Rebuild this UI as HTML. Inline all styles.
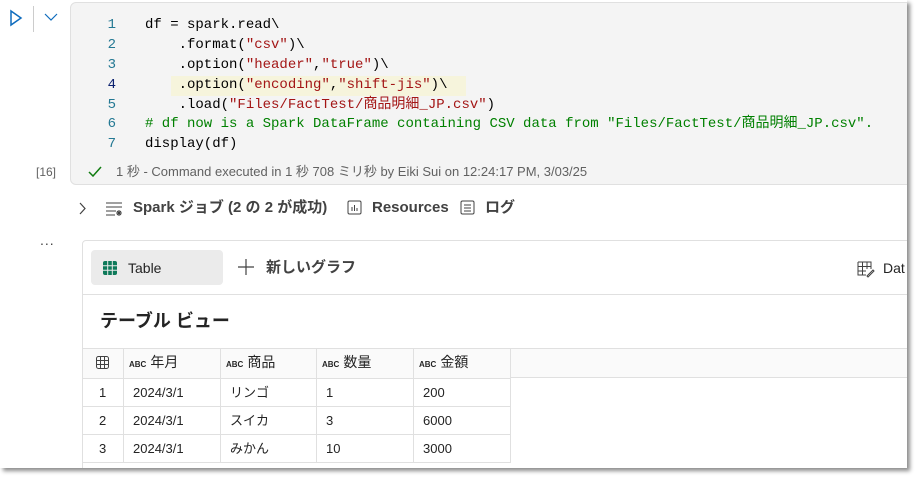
<!DOCTYPE html>
<html><head><meta charset="utf-8"><style>
*{margin:0;padding:0;box-sizing:border-box}
body{width:921px;height:484px;background:#fff;position:relative;overflow:hidden;font-family:"Liberation Sans","Noto Sans CJK JP",sans-serif;color:#242424}
.frame{position:absolute;left:0;top:0;width:907px;height:468px;background:#fff;overflow:hidden;box-shadow:3px 3px 4px rgba(0,0,0,.45)}
.abs{position:absolute;line-height:20px;white-space:nowrap}
.code{left:70px;top:2px;width:850px;height:183px;background:#f4f4f4;border:1px solid #e0e0e0;border-radius:6px}
.ln{position:absolute;left:100px;width:16px;text-align:right;font:14px/20px "Liberation Mono",monospace;color:#237893}
.cl{position:absolute;left:145px;height:20px;font:14px/20px "Liberation Mono","Noto Sans CJK JP",monospace;color:#000;white-space:pre}
.s{color:#a31515}.c{color:#008000}
.out{left:82px;top:240px;width:840px;height:240px;border:1px solid #e0e0e0;border-radius:4px;background:#fff}
table{position:absolute;left:82px;top:348px;border-collapse:collapse;font-size:13px;line-height:16px}
td{border:1px solid #e0e0e0;height:28px;padding-left:9px;color:#242424}
tr.h td{background:#fafafa;height:30px;font-size:14px}
.abc{font-size:8px;font-weight:bold;margin-right:4px}
</style></head><body><div class="frame">
<svg class="abs" style="left:9px;top:9px" width="14" height="18"><path d="M2 2 L12 9 L2 16 Z" fill="none" stroke="#0f6cbd" stroke-width="1.5"/></svg>
<div class="abs" style="left:33px;top:6px;width:1px;height:26px;background:#ccc"></div>
<svg class="abs" style="left:44px;top:13px" width="14" height="9"><path d="M1 1 L7 7 L13 1" fill="none" stroke="#0f6cbd" stroke-width="1.2"/></svg>
<div class="abs code"></div>
<div class="abs" style="left:171px;top:76px;width:295px;height:20px;background:#f6f4dc"></div>
<div class="ln" style="top:15px">1</div><div class="ln" style="top:35px">2</div><div class="ln" style="top:55px">3</div><div class="ln" style="top:75px;color:#0b216f">4</div><div class="ln" style="top:95px">5</div><div class="ln" style="top:114px">6</div><div class="ln" style="top:134px">7</div>
<div class="cl" style="top:15px">df = spark.read\</div>
<div class="cl" style="top:35px">    .format(<span class="s">"csv"</span>)\</div>
<div class="cl" style="top:55px">    .option(<span class="s">"header"</span>,<span class="s">"true"</span>)\</div>
<div class="cl" style="top:75px">    .option(<span class="s">"encoding"</span>,<span class="s">"shift-jis"</span>)\</div>
<div class="cl" style="top:95px">    .load(<span class="s">"Files/FactTest/商品明細_JP.csv"</span>)</div>
<div class="cl c" style="top:114px"># df now is a Spark DataFrame containing CSV data from "Files/FactTest/商品明細_JP.csv".</div>
<div class="cl" style="top:134px">display(df)</div>
<div class="abs" style="left:36px;top:162px;font-size:12px;color:#616161">[16]</div>
<svg class="abs" style="left:88px;top:166px" width="14" height="11"><path d="M1 6 L5 10 L13 1" fill="none" stroke="#107c10" stroke-width="1.5"/></svg>
<div class="abs" style="left:116px;top:162px;font-size:13px;color:#616161">1 秒 - Command executed in 1 秒 708 ミリ秒 by Eiki Sui on 12:24:17 PM, 3/03/25</div>
<svg class="abs" style="left:78px;top:202px" width="9" height="13"><path d="M2 1 L7 6.5 L2 12" fill="none" stroke="#424242" stroke-width="1.2"/></svg>
<svg class="abs" style="left:106px;top:201px" width="18" height="15"><path d="M0 2H16M0 6H16M0 10H10M0 14H9M13 9V15M10 12H16M11 10L15 14M15 10L11 14" stroke="#424242" stroke-width="1.1"/></svg>
<div class="abs" style="left:133px;top:198px;font-size:15px;font-weight:bold;color:#424242">Spark ジョブ (2 の 2 が成功)</div>
<svg class="abs" style="left:347px;top:200px" width="15" height="15"><rect x="1" y="1" width="13" height="13" rx="1.5" fill="none" stroke="#424242"/><path d="M5 11V7M7.5 11V5M10 11V8" stroke="#424242"/></svg>
<div class="abs" style="left:372px;top:198px;font-size:15px;font-weight:bold;color:#424242">Resources</div>
<svg class="abs" style="left:460px;top:200px" width="15" height="15"><rect x="1" y="1" width="13" height="13" rx="1.5" fill="none" stroke="#424242"/><path d="M4 5H11M4 8H11M4 11H11" stroke="#424242"/></svg>
<div class="abs" style="left:485px;top:198px;font-size:15px;font-weight:bold;color:#424242">ログ</div>
<div class="abs" style="left:40px;top:230px;font-size:14px;color:#424242;letter-spacing:1px">...</div>
<div class="abs out"></div>
<div class="abs" style="left:91px;top:250px;width:132px;height:35px;background:#ebebeb;border-radius:4px"></div>
<svg class="abs" style="left:103px;top:261px" width="14" height="14"><rect width="14" height="14" rx="2" fill="#0e7a5a"/><path d="M4.7 0V14M9.3 0V14M0 4.7H14M0 9.3H14" stroke="#ebebeb" stroke-width="1"/></svg>
<div class="abs" style="left:128px;top:258px;font-size:14px">Table</div>
<svg class="abs" style="left:238px;top:259px" width="16" height="16"><path d="M8 0V16M0 8H16" stroke="#424242" stroke-width="1.2"/></svg>
<div class="abs" style="left:266px;top:258px;font-size:15px;font-weight:bold;color:#424242">新しいグラフ</div>
<svg class="abs" style="left:857px;top:261px" width="18" height="17"><path d="M1 1H14V8M1 1V14H9M1 5.5H14M1 10H9M5.5 1V14M10 1V8" fill="none" stroke="#424242"/><path d="M10 15L16 9L17 10L11 16Z" fill="none" stroke="#424242"/></svg>
<div class="abs" style="left:883px;top:258px;font-size:14px">Dat</div>
<div class="abs" style="left:82px;top:294px;width:840px;height:1px;background:#e0e0e0"></div>
<div class="abs" style="left:100px;top:311px;font-size:18px;font-weight:bold">テーブル ビュー</div>
<div class="abs" style="left:82px;top:348px;width:840px;height:30px;background:#fafafa;border-top:1px solid #e0e0e0;border-bottom:1px solid #e0e0e0"></div>
<table>
<tr class="h"><td style="width:41px;padding-left:13px"><svg width="13" height="13"><rect x=".5" y=".5" width="12" height="12" rx="2" fill="none" stroke="#424242"/><path d="M4.5 0V13M8.5 0V13M0 4.5H13M0 8.5H13" stroke="#424242"/></svg></td><td style="width:97px;padding-left:5px"><span class="abc">ABC</span>年月</td><td style="width:96px;padding-left:5px"><span class="abc">ABC</span>商品</td><td style="width:97px;padding-left:5px"><span class="abc">ABC</span>数量</td><td style="width:97px;padding-left:5px"><span class="abc">ABC</span>金額</td></tr>
<tr><td style="padding-left:16px">1</td><td>2024/3/1</td><td>リンゴ</td><td>1</td><td>200</td></tr>
<tr><td style="padding-left:16px">2</td><td>2024/3/1</td><td>スイカ</td><td>3</td><td>6000</td></tr>
<tr><td style="padding-left:16px">3</td><td>2024/3/1</td><td>みかん</td><td>10</td><td>3000</td></tr>
</table>
</div></body></html>
